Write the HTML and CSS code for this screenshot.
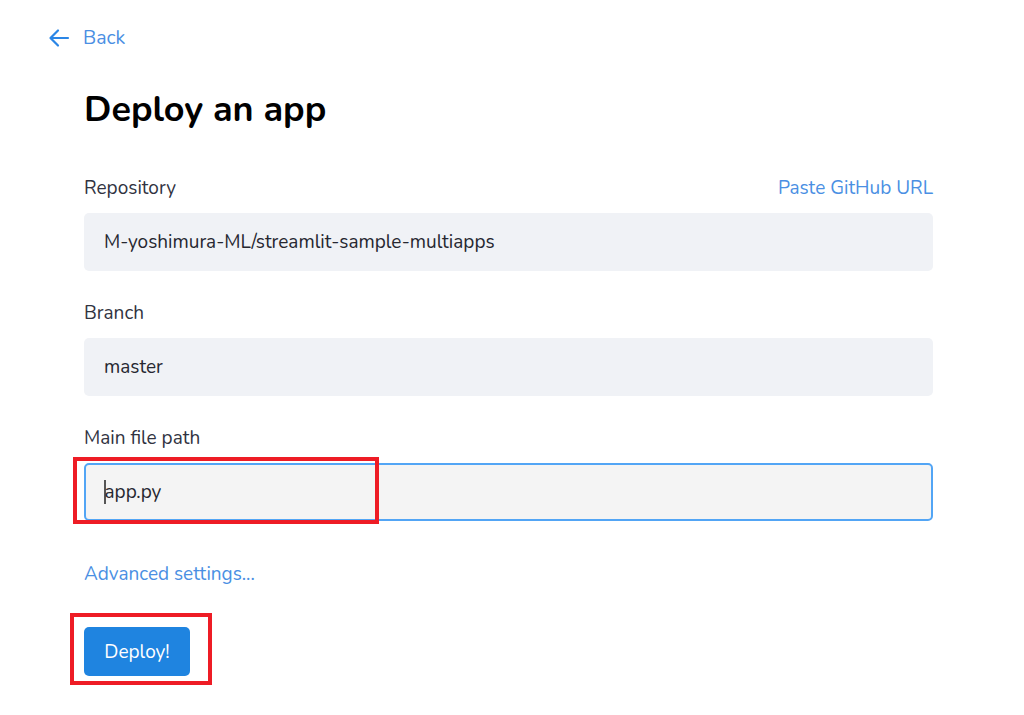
FILE: index.html
```html
<!DOCTYPE html>
<html>
<head>
<meta charset="utf-8">
<link rel="stylesheet" href="styles.css">
</head>
<body>
<div class="page">
  <a class="back">
    <svg class="back-icon" width="22" height="22" viewBox="0 0 22 22" fill="none" stroke="#2b86e6" stroke-width="2.2" stroke-linecap="round" stroke-linejoin="round"><path d="M20 11H3"/><path d="M10 3.5L2.5 11L10 18.5"/></svg>
    <span>Back</span>
  </a>
  <div class="content">
    <h1 class="title">Deploy an app</h1>
    <div class="field">
      <div class="label-row"><span class="label">Repository</span><a class="link">Paste GitHub URL</a></div>
      <div class="input">M-yoshimura-ML/streamlit-sample-multiapps</div>
    </div>
    <div class="field">
      <div class="label-row"><span class="label">Branch</span></div>
      <div class="input">master</div>
    </div>
    <div class="field">
      <div class="label-row"><span class="label">Main file path</span></div>
      <div class="input-wrap">
        <div class="input focused"><span class="caret"></span>app.py</div>
        <div class="mark mark-input"></div>
      </div>
    </div>
    <a class="link advanced">Advanced settings...</a>
    <div class="button-wrap">
      <button class="deploy">Deploy!</button>
      <div class="mark mark-button"></div>
    </div>
  </div>
</div>
</body>
</html>
```
FILE: styles.css
```css
html, body {
  margin: 0;
  padding: 0;
  background: #ffffff;
}
body {
  font-family: "Nunito", Lato, "Open Sans", sans-serif;
  color: #31333f;
  width: 1024px;
  height: 715px;
  overflow: hidden;
}
.page {
  padding: 25px 0 0 48px;
}
.back {
  display: flex;
  align-items: center;
  gap: 13px;
  color: #4a8fe3;
  font-size: 19.5px;
  line-height: 26px;
  height: 26px;
}
.back-icon {
  display: block;
}
.content {
  padding-left: 36px;
  width: 849px;
}
.title {
  margin: 37px 0 0 0;
  font-size: 36px;
  line-height: 44px;
  font-weight: 700;
  color: #000000;
}
.field {
  display: flex;
  flex-direction: column;
}
.title + .field {
  margin-top: 43px;
}
.field + .field {
  margin-top: 29px;
}
.label-row {
  display: flex;
  justify-content: space-between;
  align-items: center;
  height: 26px;
  line-height: 26px;
  font-size: 19px;
  margin-bottom: 12px;
}
.label {
  color: #31333f;
}
.link {
  color: #4a8fe3;
  font-size: 19px;
  line-height: 26px;
}
.input {
  box-sizing: border-box;
  height: 58px;
  background: #f0f2f6;
  border-radius: 5px;
  padding: 0 20px;
  display: flex;
  align-items: center;
  font-size: 19px;
  color: #262730;
}
.input-wrap {
  position: relative;
}
.input.focused {
  background: #f4f4f4;
  border: 2px solid #52a5f5;
  padding: 0 18px;
}
.caret {
  display: inline-block;
  width: 1.5px;
  height: 24px;
  background: #555;
  margin-right: -1px;
}
.mark {
  position: absolute;
  border: 4px solid #ee1c25;
  box-sizing: border-box;
  pointer-events: none;
}
.mark-input {
  left: -11px;
  top: -6px;
  width: 306px;
  height: 67px;
}
.advanced {
  display: block;
  margin-top: 40px;
}
.button-wrap {
  position: relative;
  margin-top: 40px;
  width: 106px;
}
.deploy {
  display: block;
  width: 106px;
  height: 49px;
  background: #1f84e0;
  color: #ffffff;
  border: none;
  border-radius: 5px;
  font-family: inherit;
  font-size: 19px;
  padding: 0;
}
.mark-button {
  left: -14px;
  top: -14px;
  width: 142px;
  height: 72px;
}
```
